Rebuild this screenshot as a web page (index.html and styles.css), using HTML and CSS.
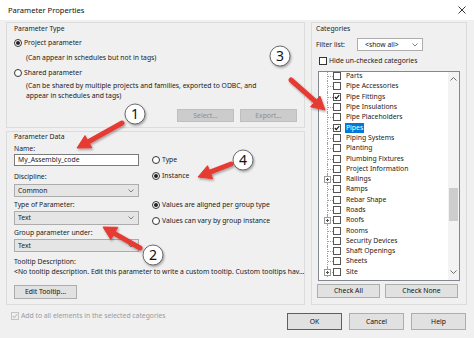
FILE: index.html
```html
<!DOCTYPE html>
<html lang="en">
<head>
  <meta charset="UTF-8" />
  <title>Parameter Properties</title>
  <link rel="stylesheet" href="styles.css">
</head>
<body>
  <div class="dialog">
    <div class="titlebar">
      <span class="title">Parameter Properties</span>
      <svg class="close" width="8" height="8" viewBox="0 0 8 8"><path d="M0.5 0.5L7.5 7.5M7.5 0.5L0.5 7.5" stroke="#222" stroke-width="0.9"/></svg>
    </div>

    <div class="main">
      <div class="left-col">
        <!-- Parameter Type -->
        <div class="group type-group">
          <div class="group-label">Parameter Type</div>
          <div class="radio-row r-project"><span class="radio checked"></span>Project parameter</div>
          <div class="hint h-project">(Can appear in schedules but not in tags)</div>
          <div class="radio-row r-shared"><span class="radio"></span>Shared parameter</div>
          <div class="hint h-shared">(Can be shared by multiple projects and families, exported to ODBC, and<br>appear in schedules and tags)</div>
          <div class="btn-row">
            <button class="btn disabled">Select...</button>
            <button class="btn disabled">Export...</button>
          </div>
        </div>

        <!-- Parameter Data -->
        <div class="group data-group">
          <div class="group-label">Parameter Data</div>
          <div class="data-row">
            <div class="fields">
              <div class="field-label f-name">Name:</div>
              <div class="textbox">My_Assembly_code</div>
              <div class="field-label f-disc">Discipline:</div>
              <div class="combo c-disc">Common<svg class="chev" width="6" height="4" viewBox="0 0 6 4"><path d="M0.5 0.5L3 3L5.5 0.5" fill="none" stroke="#666" stroke-width="0.8"/></svg></div>
              <div class="field-label f-type">Type of Parameter:</div>
              <div class="combo c-type">Text<svg class="chev" width="6" height="4" viewBox="0 0 6 4"><path d="M0.5 0.5L3 3L5.5 0.5" fill="none" stroke="#666" stroke-width="0.8"/></svg></div>
              <div class="field-label f-group">Group parameter under:</div>
              <div class="combo c-group">Text<svg class="chev" width="6" height="4" viewBox="0 0 6 4"><path d="M0.5 0.5L3 3L5.5 0.5" fill="none" stroke="#666" stroke-width="0.8"/></svg></div>
            </div>
            <div class="options">
              <div class="radio-row o-type"><span class="radio"></span>Type</div>
              <div class="radio-row o-inst"><span class="radio checked"></span>Instance</div>
              <div class="radio-row o-aligned"><span class="radio checked"></span>Values are aligned per group type</div>
              <div class="radio-row o-vary"><span class="radio"></span>Values can vary by group instance</div>
            </div>
          </div>
          <div class="field-label f-tip">Tooltip Description:</div>
          <div class="tip-text">&lt;No tooltip description. Edit this parameter to write a custom tooltip. Custom tooltips hav...</div>
          <button class="btn edit-tip">Edit Tooltip...</button>
        </div>
      </div>

      <!-- Categories -->
      <div class="group categories">
        <div class="group-label">Categories</div>
        <div class="filter-row">
          <span class="filter-label">Filter list:</span>
          <div class="combo filter-combo">&lt;show all&gt;<svg class="chev" width="6" height="4" viewBox="0 0 6 4"><path d="M0.5 0.5L3 3L5.5 0.5" fill="none" stroke="#666" stroke-width="0.8"/></svg></div>
        </div>
        <div class="hide-row"><span class="cb"></span>Hide un-checked categories</div>

        <div class="cat-list">
          <div class="tree">
            <div class="node"><span class="twig"></span><span class="cb"></span><span class="name">Parts</span></div>
            <div class="node"><span class="twig"></span><span class="cb"></span><span class="name">Pipe Accessories</span></div>
            <div class="node"><span class="twig"></span><span class="cb checked"><svg width="6" height="6" viewBox="0 0 6 6"><path d="M0.8 3L2.3 4.6L5.2 1.2" fill="none" stroke="#111" stroke-width="1.1"/></svg></span><span class="name">Pipe Fittings</span></div>
            <div class="node"><span class="twig"></span><span class="cb"></span><span class="name">Pipe Insulations</span></div>
            <div class="node"><span class="twig"></span><span class="cb"></span><span class="name">Pipe Placeholders</span></div>
            <div class="node"><span class="twig"></span><span class="cb checked"><svg width="6" height="6" viewBox="0 0 6 6"><path d="M0.8 3L2.3 4.6L5.2 1.2" fill="none" stroke="#111" stroke-width="1.1"/></svg></span><span class="name selected">Pipes</span></div>
            <div class="node"><span class="twig"></span><span class="cb"></span><span class="name">Piping Systems</span></div>
            <div class="node"><span class="twig"></span><span class="cb"></span><span class="name">Planting</span></div>
            <div class="node"><span class="twig"></span><span class="cb"></span><span class="name">Plumbing Fixtures</span></div>
            <div class="node"><span class="twig"></span><span class="cb"></span><span class="name">Project Information</span></div>
            <div class="node"><span class="twig"><span class="plus"></span></span><span class="cb"></span><span class="name">Railings</span></div>
            <div class="node"><span class="twig"></span><span class="cb"></span><span class="name">Ramps</span></div>
            <div class="node"><span class="twig"></span><span class="cb"></span><span class="name">Rebar Shape</span></div>
            <div class="node"><span class="twig"></span><span class="cb"></span><span class="name">Roads</span></div>
            <div class="node"><span class="twig"><span class="plus"></span></span><span class="cb"></span><span class="name">Roofs</span></div>
            <div class="node"><span class="twig"></span><span class="cb"></span><span class="name">Rooms</span></div>
            <div class="node"><span class="twig"></span><span class="cb"></span><span class="name">Security Devices</span></div>
            <div class="node"><span class="twig"></span><span class="cb"></span><span class="name">Shaft Openings</span></div>
            <div class="node"><span class="twig"></span><span class="cb"></span><span class="name">Sheets</span></div>
            <div class="node"><span class="twig"><span class="plus"></span></span><span class="cb"></span><span class="name">Site</span></div>
          </div>
          <div class="scrollbar">
            <svg class="arrow-up" width="7" height="4" viewBox="0 0 7 4"><path d="M0.5 3.5L3.5 0.5L6.5 3.5" fill="none" stroke="#606060" stroke-width="0.9"/></svg>
            <div class="track"><div class="thumb"></div></div>
            <svg class="arrow-down" width="7" height="4" viewBox="0 0 7 4"><path d="M0.5 0.5L3.5 3.5L6.5 0.5" fill="none" stroke="#606060" stroke-width="0.9"/></svg>
          </div>
        </div>

        <div class="check-row">
          <button class="btn check-all">Check All</button>
          <button class="btn check-none">Check None</button>
        </div>
      </div>
    </div>

    <div class="footer">
      <div class="add-all"><span class="cb disabled"><svg width="6" height="6" viewBox="0 0 6 6"><path d="M0.8 3L2.3 4.6L5.2 1.2" fill="none" stroke="#c4c4c4" stroke-width="1.1"/></svg></span>Add to all elements in the selected categories</div>
      <div class="actions">
        <button class="btn default">OK</button>
        <button class="btn">Cancel</button>
        <button class="btn">Help</button>
      </div>
    </div>

    <!-- callouts drawn over the dialog -->
    <svg class="callouts" width="474" height="338" viewBox="0 0 474 338">
      <defs>
        <filter id="shade" x="-30%" y="-30%" width="160%" height="160%">
          <feDropShadow dx="1" dy="1.5" stdDeviation="1.2" flood-color="#000" flood-opacity="0.35"/>
        </filter>
      </defs>
      <g fill="#e63b31" stroke="#e63b31" filter="url(#shade)">
        <line x1="122" y1="123" x2="88.4" y2="141.7" stroke-width="5" stroke-linecap="round"/>
        <polygon points="77,148 91.8,147.8 85,135.6" stroke-width="1" stroke-linejoin="round"/>
        <line x1="140" y1="248" x2="114.3" y2="233.4" stroke-width="5" stroke-linecap="round"/>
        <polygon points="103,227 110.8,239.5 117.8,227.3" stroke-width="1" stroke-linejoin="round"/>
        <line x1="291" y1="80" x2="315.3" y2="101.4" stroke-width="5" stroke-linecap="round"/>
        <polygon points="325,110 319.9,96.1 310.6,106.7" stroke-width="1" stroke-linejoin="round"/>
        <line x1="231" y1="164" x2="210.1" y2="172.2" stroke-width="5" stroke-linecap="round"/>
        <polygon points="198,177 212.7,178.7 207.5,165.7" stroke-width="1" stroke-linejoin="round"/>
      </g>
      <g class="badge" filter="url(#shade)">
        <circle cx="135" cy="114" r="10"/>
        <circle cx="153" cy="255" r="10"/>
        <circle cx="280" cy="56" r="10"/>
        <circle cx="243" cy="160" r="10"/>
      </g>
      <g class="badge-num">
        <text x="135" y="119">1</text>
        <text x="153" y="260">2</text>
        <text x="280" y="61">3</text>
        <text x="243" y="165">4</text>
      </g>
    </svg>
  </div>
</body>
</html>
```

FILE: styles.css
```css
* {
  box-sizing: border-box;
}

body {
  margin: 0;
  font-family: "Noto Sans", "Open Sans", sans-serif;
  font-size: 6.8px;
  line-height: 10px;
  color: #1a1a1a;
  background: #f0f0f0;
}

.dialog {
  position: relative;
  width: 474px;
  height: 338px;
  background: #f0f0f0;
  overflow: hidden;
}

.titlebar {
  height: 20px;
  background: #ffffff;
  display: flex;
  align-items: center;
  justify-content: space-between;
  padding: 0 8px 0 8px;
}

.title {
  font-size: 7.6px;
  color: #111;
}

.main {
  display: flex;
  gap: 6px;
  padding: 2px 7px 0 6px;
}

.left-col {
  width: 299px;
  display: flex;
  flex-direction: column;
  gap: 3px;
}

.group {
  border: 1px solid #dcdcdc;
}

.group-label {
  color: #222;
}

/* radios */
.radio-row {
  display: flex;
  align-items: center;
  height: 10px;
}

.radio {
  width: 8px;
  height: 8px;
  border: 1px solid #333;
  border-radius: 50%;
  background: #fff;
  margin-right: 2px;
  display: flex;
  align-items: center;
  justify-content: center;
  flex: none;
}

.radio.checked::after {
  content: "";
  width: 4px;
  height: 4px;
  border-radius: 50%;
  background: #222;
}

/* buttons */
.btn {
  font: inherit;
  color: #111;
  background: #e1e1e1;
  border: 1px solid #adadad;
  padding: 0;
  height: 14px;
  line-height: 12px;
}

.btn.disabled {
  background: #cccccc;
  border-color: #bfbfbf;
  color: #8d8d8d;
}

.btn.default {
  border: 1.5px solid #0078d7;
}

/* parameter type */
.type-group {
  height: 106px;
  padding: 1px 7px 0 7px;
}

.r-project {
  margin-top: 4px;
}

.hint {
  padding-left: 12px;
}

.h-project {
  margin-top: 5px;
}

.r-shared {
  margin-top: 5px;
}

.h-shared {
  margin-top: 3px;
}

.btn-row {
  display: flex;
  justify-content: flex-end;
  gap: 6px;
  margin-top: 8px;
}

.btn-row .btn {
  width: 57px;
  height: 13px;
}

/* parameter data */
.data-group {
  height: 174px;
  padding: 0 7px;
}

.data-row {
  display: flex;
}

.fields {
  width: 125px;
}

.field-label {
  height: 10px;
}

.f-name {
  margin-top: 2px;
}

.textbox {
  height: 12px;
  line-height: 10px;
  background: #fff;
  border: 1px solid #7a7a7a;
  padding-left: 3px;
}

.combo {
  display: flex;
  align-items: center;
  justify-content: space-between;
  background: #e5e5e5;
  border: 1px solid #acacac;
  padding: 0 4px 0 3px;
}

.f-disc {
  margin-top: 6px;
}

.c-disc {
  margin-top: 2px;
  height: 13px;
}

.f-type,
.f-group {
  margin-top: 3px;
}

.c-type {
  margin-top: 1px;
  height: 14px;
}

.c-group {
  margin-top: 1px;
  height: 13px;
}

.options {
  margin-left: 13px;
  padding-top: 13px;
}

.o-inst {
  margin-top: 6px;
}

.o-aligned {
  margin-top: 19px;
}

.o-vary {
  margin-top: 6px;
}

.f-tip {
  margin-top: 5px;
}

.tip-text {
  white-space: nowrap;
}

.edit-tip {
  margin-top: 8px;
  width: 63px;
}

/* categories */
.categories {
  width: 156px;
  height: 283px;
  padding: 1px 6px 0 4px;
}

.filter-row {
  display: flex;
  align-items: center;
  margin-top: 4px;
  height: 13px;
}

.filter-label {
  width: 41px;
}

.filter-combo {
  width: 66px;
  height: 13px;
  background: #fff;
  border-color: #adadad;
  padding-left: 7px;
}

.hide-row {
  display: flex;
  align-items: center;
  margin-top: 5px;
  height: 10px;
  padding-left: 3px;
}

.cb {
  width: 8px;
  height: 8px;
  border: 1px solid #333;
  background: #fff;
  margin-right: 2px;
  flex: none;
  display: flex;
  align-items: center;
  justify-content: center;
}

.cat-list {
  display: flex;
  margin: 5px 0 0 2px;
  height: 210px;
  background: #fff;
  border: 1px solid #828790;
  overflow: hidden;
}

.tree {
  flex: 1;
  margin-top: -1px;
}

.node {
  display: flex;
  align-items: center;
  height: 10.3px;
  padding-left: 8px;
}

.twig {
  align-self: stretch;
  width: 6px;
  border-left: 1px dotted #a0a0a0;
  position: relative;
}

.twig::after {
  content: "";
  position: absolute;
  left: 0;
  right: 0;
  top: 50%;
  border-top: 1px dotted #a0a0a0;
}

.plus {
  position: absolute;
  left: -4px;
  top: 50%;
  margin-top: -3px;
  width: 7px;
  height: 7px;
  border: 1px solid #9a9a9a;
  z-index: 1;
  background:
    linear-gradient(#555, #555) center / 3px 1px no-repeat,
    linear-gradient(#555, #555) center / 1px 3px no-repeat,
    #fff;
}

.node .cb {
  margin-right: 5px;
  border-color: #555;
}

.name.selected {
  background: #0078d7;
  color: #fff;
  padding: 0 1px;
  margin-left: -1px;
}

.scrollbar {
  width: 11px;
  background: #f3f3f3;
  display: flex;
  flex-direction: column;
  align-items: center;
}

.arrow-up {
  margin-top: 5px;
}

.track {
  flex: 1;
  width: 100%;
  padding-top: 107px;
}

.thumb {
  margin: 0 auto;
  width: 9px;
  height: 33px;
  background: #cdcdcd;
}

.arrow-down {
  margin-bottom: 6px;
}

.check-row {
  display: flex;
  gap: 5px;
  margin: 3px 0 0 1px;
}

.check-all {
  width: 63px;
}

.check-none {
  width: 73px;
}

/* footer */
.footer {
  display: flex;
  align-items: flex-start;
  padding-right: 8px;
}

.add-all {
  display: flex;
  align-items: center;
  margin: 6px 0 0 11px;
  height: 10px;
  color: #9a9a9a;
}

.cb.disabled {
  border-color: #c4c4c4;
  background: #f0f0f0;
}

.actions {
  margin-left: auto;
  margin-top: 8px;
  display: flex;
  gap: 7px;
}

.actions .btn {
  width: 55px;
  height: 17px;
}

/* callouts */
.callouts {
  position: absolute;
  left: 0;
  top: 0;
  pointer-events: none;
}

.badge circle {
  fill: #fff;
  stroke: #4a4a4a;
  stroke-width: 0.8;
}

.badge-num text {
  font-family: "Noto Sans", sans-serif;
  font-size: 14px;
  text-anchor: middle;
  fill: #111;
}
```
